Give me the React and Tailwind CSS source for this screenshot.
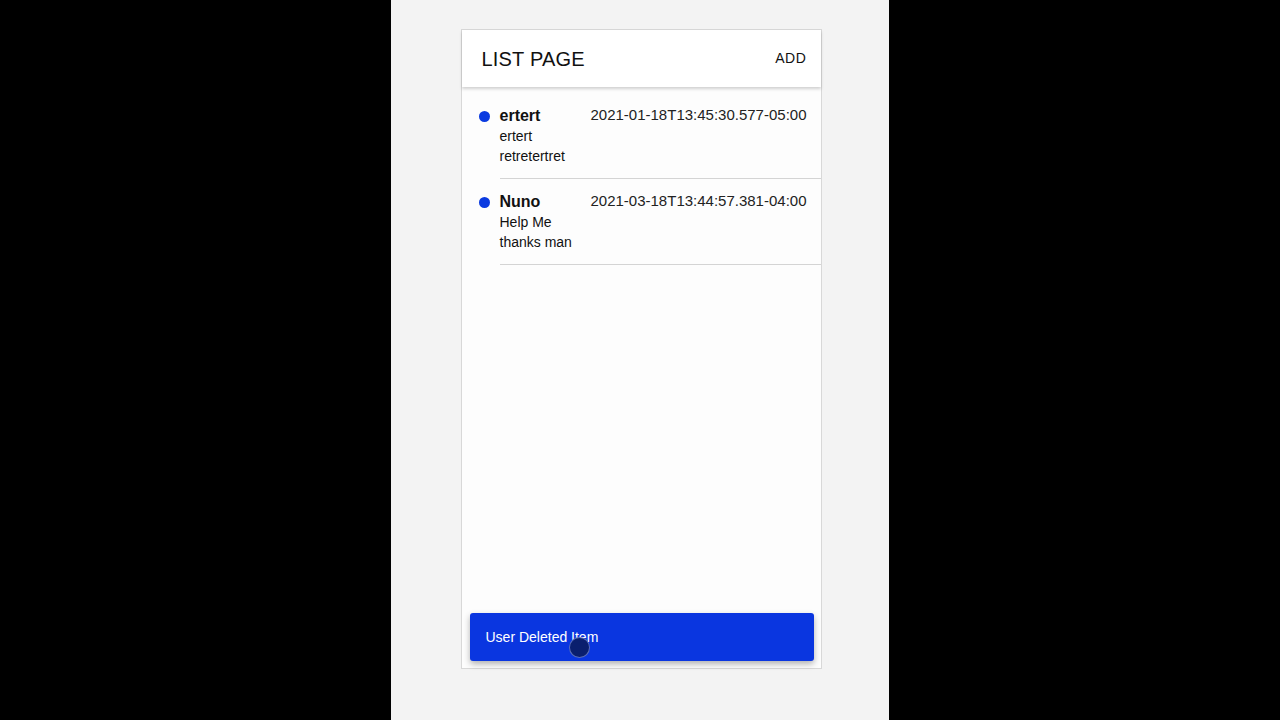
import React from "react";

const items = [
  { id: 1, name: "ertert", lines: ["ertert", "retretertret"], date: "2021-01-18T13:45:30.577-05:00" },
  { id: 2, name: "Nuno", lines: ["Help Me", "thanks man"], date: "2021-03-18T13:44:57.381-04:00" },
];

const ListItem = ({ item }) => (
  <div className="flex pl-[17px]">
    <div className="pt-[18px] w-[21px] shrink-0">
      <div className="size-[11px] rounded-full bg-[#0a3ae0]" />
    </div>
    <div className="flex-1 border-b border-[#d4d4d4] pb-[12px] pt-[13px] flex justify-between pr-[14px]">
      <div>
        <div className="text-[16px] font-bold leading-[20px] text-[#111]">{item.name}</div>
        {item.lines.map((l) => (
          <div key={l} className="text-[14px] leading-[20px] text-[#111]">{l}</div>
        ))}
      </div>
      <div className="text-[15px] leading-[20px] text-[#222] -mt-[1px]">{item.date}</div>
    </div>
  </div>
);

export default function App() {
  return (
    <div className="w-[1280px] h-[720px] bg-black flex justify-center font-['Liberation_Sans',Arial,sans-serif] overflow-hidden">
      <div className="w-[498px] h-full bg-[#f3f3f3] pt-[29px] pl-[2px] flex justify-center">
        <div className="w-[361px] h-[640px] bg-[#fdfdfd] border border-[#d8d8d8] flex flex-col relative">
          {/* Header */}
          <div className="h-[57px] shrink-0 flex items-center justify-between pl-[20px] pr-[14px] bg-white shadow-[0_2px_3px_rgba(0,0,0,0.18)] z-10">
            <span className="text-[20px] font-medium text-[#111] tracking-[0.2px]">LIST PAGE</span>
            <span className="text-[14px] font-medium text-[#111] tracking-[0.6px]">ADD</span>
          </div>

          {/* List */}
          <div className="flex-1 pt-[6px]">
            {items.map((item) => (
              <ListItem key={item.id} item={item} />
            ))}
          </div>

          {/* Toast */}
          <div className="absolute left-[8px] right-[7px] bottom-[7px] h-[48px] bg-[#0a36e0] rounded-[3px] shadow-[0_3px_6px_rgba(0,0,0,0.3)] flex items-center px-[16px]">
            <span className="text-[14px] text-white">User Deleted Item</span>
            <div className="absolute left-[99px] top-[24px] size-[21px] rounded-full bg-[#0a1f6e] border border-[#7c8fd6]/70" />
          </div>
        </div>
      </div>
    </div>
  );
}
